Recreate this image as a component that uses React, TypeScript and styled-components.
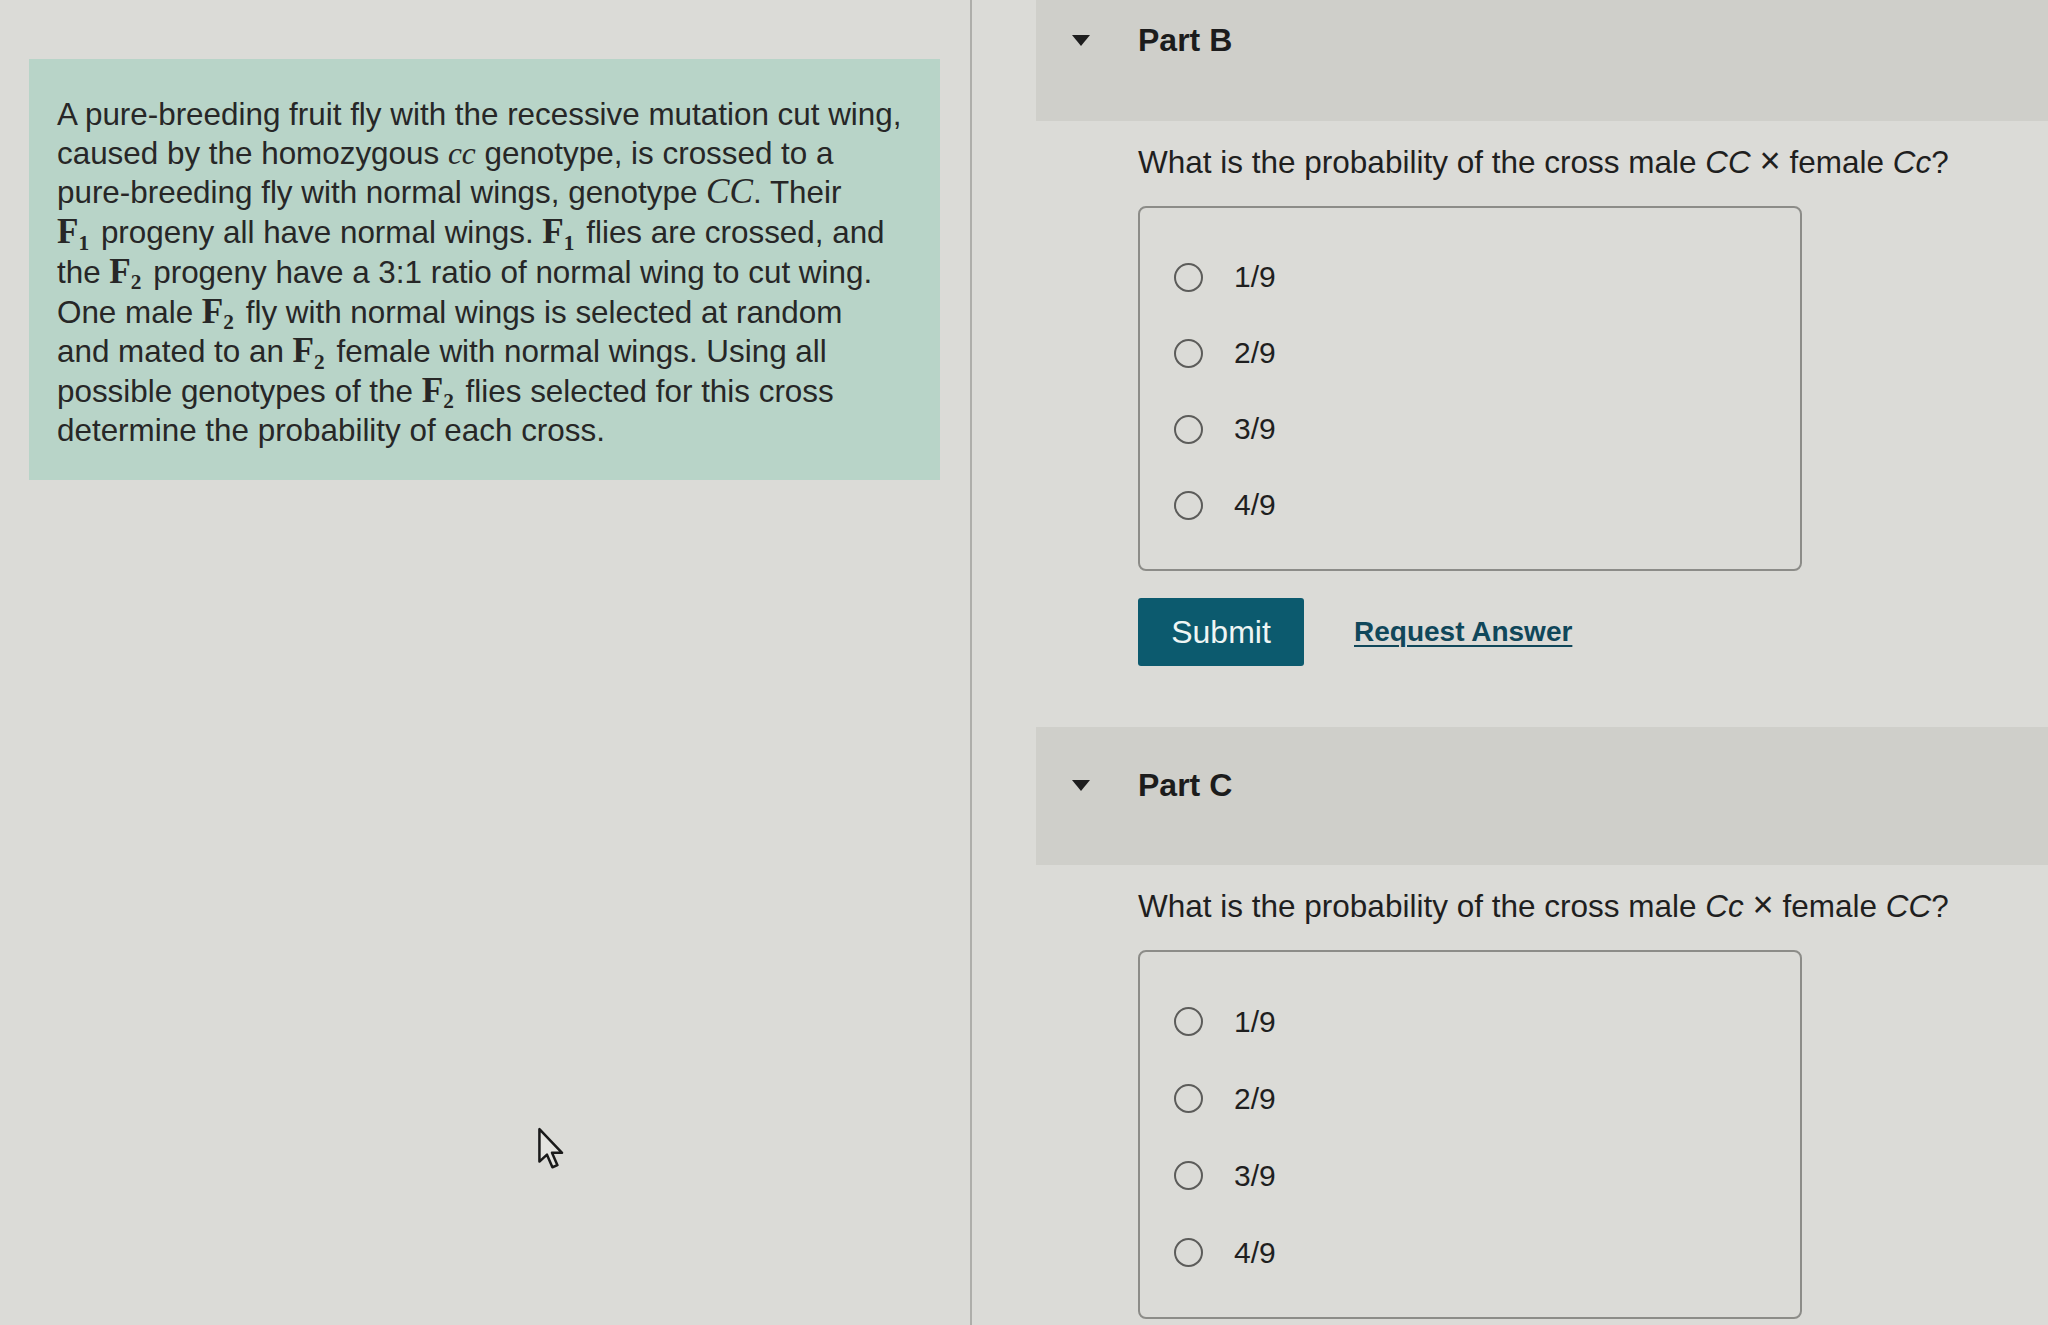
import React from "react";
import styled, { createGlobalStyle } from "styled-components";

const GlobalStyle = createGlobalStyle`
  html, body {
    margin: 0;
    padding: 0;
    background: #dbdbd7;
    font-family: "Liberation Sans", Arial, sans-serif;
    color: #222;
  }
  * { box-sizing: border-box; }
`;

const Page = styled.div`
  display: grid;
  grid-template-columns: 970px 2px 1fr;
  width: 2048px;
  height: 1325px;
  overflow: hidden;
  position: relative;
`;

const LeftColumn = styled.div`
  padding: 59px 30px 0 29px;
`;

const ProblemBox = styled.div`
  background: #b8d4c8;
  padding: 37px 20px 30px 28px;
  font-size: 31.4px;
  line-height: 38.7px;
  color: #272727;
`;

const Line = styled.span`
  display: block;
  white-space: nowrap;
`;

const MathF = styled.span`
  font-family: "Liberation Serif", "Times New Roman", serif;
  font-size: 1.12em;
  font-weight: 600;
`;

const MathSub = styled.sub`
  font-family: "Liberation Serif", "Times New Roman", serif;
  font-size: 0.68em;
  font-weight: 700;
  vertical-align: -0.3em;
  line-height: 0;
  margin-right: 3px;
`;

const MathItalic = styled.i<{ $big?: boolean }>`
  font-family: "Liberation Serif", "Times New Roman", serif;
  font-size: ${(p) => (p.$big ? "1.12em" : "1em")};
`;

const Divider = styled.div`
  background: #aeaeaa;
`;

const RightColumn = styled.div`
  display: flex;
  flex-direction: column;
  margin-top: -18px;
`;

const PartHeader = styled.div<{ $h: number }>`
  margin-left: 64px;
  height: ${(p) => p.$h}px;
  background: #cfcfca;
  display: flex;
  align-items: flex-start;
  padding: 38px 0 0 36px;
  gap: 48px;
`;

const Caret = styled.svg`
  width: 18px;
  height: 40px;
  flex: none;
`;

const PartTitle = styled.h2`
  margin: 0;
  font-size: 32px;
  line-height: 40px;
  font-weight: 700;
  color: #1c1c1c;
`;

const PartBody = styled.div`
  padding-left: 166px;
  display: flex;
  flex-direction: column;
  align-items: flex-start;
`;

const Question = styled.p`
  margin: 21px 0 0;
  font-size: 31.5px;
  line-height: 40px;
  color: #1f1f1f;
  white-space: nowrap;
`;

const Gene = styled.i`
  font-style: italic;
`;

const Times = styled.span`
  font-size: 1.15em;
  line-height: 0;
`;

const OptionsBox = styled.div<{ $h: number }>`
  margin-top: 24px;
  width: 664px;
  height: ${(p) => p.$h}px;
  border: 2px solid #8c8c88;
  border-radius: 8px;
  padding: 31px 0 0 34px;
  display: flex;
  flex-direction: column;
`;

const OptionRow = styled.label<{ $step: number }>`
  display: flex;
  align-items: center;
  gap: 31px;
  height: ${(p) => p.$step}px;
  font-size: 30px;
  color: #1f1f1f;
`;

const Radio = styled.span`
  width: 29px;
  height: 29px;
  border-radius: 50%;
  border: 2.5px solid #5c5c5a;
  flex: none;
`;

const ActionRow = styled.div`
  margin-top: 27px;
  display: flex;
  align-items: center;
  gap: 50px;
`;

const SubmitButton = styled.button`
  width: 166px;
  height: 68px;
  background: #0c5a6e;
  color: #eef5f4;
  border: none;
  border-radius: 3px;
  font-family: "Liberation Sans", Arial, sans-serif;
  font-size: 32px;
  padding: 0;
`;

const RequestLink = styled.a`
  font-size: 28px;
  font-weight: 700;
  color: #10475a;
  text-decoration: underline;
  text-underline-offset: 4px;
  text-decoration-thickness: 2px;
`;

const Spacer = styled.div<{ $h: number }>`
  height: ${(p) => p.$h}px;
`;

const Cursor = styled.svg`
  position: absolute;
  left: 537px;
  top: 1127px;
  width: 30px;
  height: 44px;
`;

const F = ({ n }: { n: number }) => (
  <>
    <MathF>F</MathF>
    <MathSub>{n}</MathSub>
  </>
);

const CaretIcon = () => (
  <Caret viewBox="0 0 18 40">
    <polygon points="0,15 18,15 9,26" fill="#1e1e1e" />
  </Caret>
);

const options = ["1/9", "2/9", "3/9", "4/9"];

const Options = ({ h, step }: { h: number; step: number }) => (
  <OptionsBox $h={h}>
    {options.map((o) => (
      <OptionRow key={o} $step={step}>
        <Radio />
        {o}
      </OptionRow>
    ))}
  </OptionsBox>
);

export default function App() {
  return (
    <>
      <GlobalStyle />
      <Page>
        <LeftColumn>
          <ProblemBox>
            <Line>A pure-breeding fruit fly with the recessive mutation cut wing,</Line>
            <Line>
              caused by the homozygous <MathItalic>cc</MathItalic> genotype, is crossed to a
            </Line>
            <Line>
              pure-breeding fly with normal wings, genotype <MathItalic $big>CC</MathItalic>. Their
            </Line>
            <Line>
              <F n={1} /> progeny all have normal wings. <F n={1} /> flies are crossed, and
            </Line>
            <Line>
              the <F n={2} /> progeny have a 3:1 ratio of normal wing to cut wing.
            </Line>
            <Line>
              One male <F n={2} /> fly with normal wings is selected at random
            </Line>
            <Line>
              and mated to an <F n={2} /> female with normal wings. Using all
            </Line>
            <Line>
              possible genotypes of the <F n={2} /> flies selected for this cross
            </Line>
            <Line>determine the probability of each cross.</Line>
          </ProblemBox>
        </LeftColumn>
        <Divider />
        <RightColumn>
          <PartHeader $h={139}>
            <CaretIcon />
            <PartTitle>Part B</PartTitle>
          </PartHeader>
          <PartBody>
            <Question>
              What is the probability of the cross male <Gene>CC</Gene> <Times>×</Times> female <Gene>Cc</Gene>?
            </Question>
            <Options h={365} step={76} />
            <ActionRow>
              <SubmitButton>Submit</SubmitButton>
              <RequestLink>Request Answer</RequestLink>
            </ActionRow>
          </PartBody>
          <Spacer $h={61} />
          <PartHeader $h={138}>
            <CaretIcon />
            <PartTitle>Part C</PartTitle>
          </PartHeader>
          <PartBody>
            <Question>
              What is the probability of the cross male <Gene>Cc</Gene> <Times>×</Times> female <Gene>CC</Gene>?
            </Question>
            <Options h={369} step={77} />
          </PartBody>
        </RightColumn>
        <Cursor viewBox="0 0 14 21">
          <path
            d="M1 1 L1 16.5 L4.6 13.2 L7.2 19.2 L9.6 18.2 L7 12.3 L11.8 12.3 Z"
            fill="#e4e4e0"
            stroke="#1a1a1a"
            strokeWidth="1.2"
            strokeLinejoin="round"
          />
        </Cursor>
      </Page>
    </>
  );
}
